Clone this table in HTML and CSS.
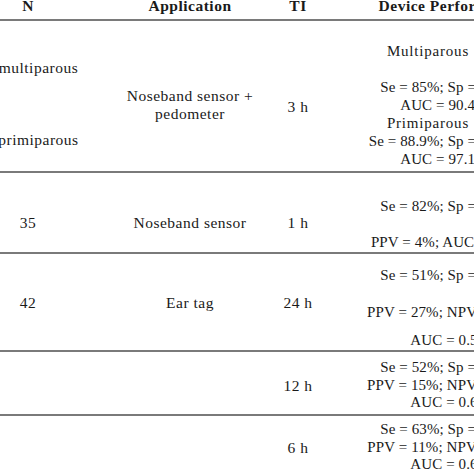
FILE: index.html
```html
<!DOCTYPE html>
<html>
<head>
<meta charset="utf-8">
<link rel="stylesheet" href="styles.css">
</head>
<body>
<div class="sheet">
  <table class="perf">
    <colgroup>
      <col class="c-n"><col class="c-app"><col class="c-ti"><col class="c-dev">
    </colgroup>
    <thead>
      <tr>
        <th>N</th>
        <th class="app">Application</th>
        <th>TI</th>
        <th class="dev-head">Device Performance</th>
      </tr>
    </thead>
    <tbody>
      <tr class="r1">
        <td class="n"><div>31 multiparous</div><div class="skip3">14 primiparous</div></td>
        <td class="app">Noseband sensor +<br>pedometer</td>
        <td class="ti">3 h</td>
        <td class="dev">
          <div class="group">Multiparous</div>
          <div class="skip1">Se = 85%; Sp = 97%</div>
          <div>AUC = 90.4%</div>
          <div class="group">Primiparous</div>
          <div>Se = 88.9%; Sp = 96.1%</div>
          <div>AUC = 97.1%</div>
        </td>
      </tr>
      <tr class="r2">
        <td class="n">35</td>
        <td class="app">Noseband sensor</td>
        <td class="ti">1 h</td>
        <td class="dev">
          <div>Se = 82%; Sp = 91%</div>
          <div class="skip1">PPV = 4%; AUC = 0.86</div>
        </td>
      </tr>
      <tr class="r3">
        <td class="n">42</td>
        <td class="app">Ear tag</td>
        <td class="ti">24 h</td>
        <td class="dev">
          <div>Se = 51%; Sp = 79%</div>
          <div class="wide">PPV = 27%; NPV = 91%</div>
          <div class="tight">AUC = 0.5</div>
        </td>
      </tr>
      <tr class="r4">
        <td class="n"></td>
        <td class="app"></td>
        <td class="ti">12 h</td>
        <td class="dev">
          <div>Se = 52%; Sp = 81%</div>
          <div>PPV = 15%; NPV = 96%</div>
          <div>AUC = 0.6</div>
        </td>
      </tr>
      <tr class="r5">
        <td class="n"></td>
        <td class="app"></td>
        <td class="ti">6 h</td>
        <td class="dev">
          <div>Se = 63%; Sp = 74%</div>
          <div>PPV = 11%; NPV = 97%</div>
          <div>AUC = 0.6</div>
        </td>
      </tr>
    </tbody>
  </table>
</div>
</body>
</html>
```

FILE: styles.css
```css
html, body {
  margin: 0;
  padding: 0;
  background: #ffffff;
}

.sheet {
  width: 474px;
  height: 474px;
  overflow: hidden;
}

.perf {
  table-layout: fixed;
  border-collapse: collapse;
  width: 596px;
  margin-left: -32px;
  margin-top: -3px;
  font-family: "Liberation Serif", "Times New Roman", serif;
  font-size: 15.5px;
  letter-spacing: 0.5px;
  line-height: 18px;
  color: #1a1a1a;
  text-align: center;
}

.c-n { width: 120px; }
.c-app { width: 184px; }
.c-ti { width: 52px; }
.c-dev { width: 240px; }

.perf th,
.perf td {
  padding: 0;
  vertical-align: top;
  white-space: nowrap;
}

.perf th {
  font-weight: bold;
  padding-bottom: 4px;
  border-bottom: 2px solid #7a7a7a;
}

.perf .app {
  padding-left: 20px;
}

.perf .dev-head {
  padding-left: 12px;
}

.perf td.dev {
  font-size: 15px;
  letter-spacing: 0.1px;
}

.perf td.dev .group {
  letter-spacing: 0.8px;
  padding-right: 32px;
}

.perf tbody tr {
  border-bottom: 2px solid #7a7a7a;
}

.skip1 { margin-top: 18px; }
.skip3 { margin-top: 54px; }
.wide { margin-top: 19px; }
.tight { margin-top: 10px; }

/* row 1: border 20 -> 172 */
.perf tr.r1 { height: 152px; }
.r1 .n { padding-top: 38px; }
.r1 .app { padding-top: 66px; }
.r1 .ti { padding-top: 77px; }
.r1 .dev { padding-top: 21px; }

/* row 2: 172 -> 253 */
.perf tr.r2 { height: 81px; }
.r2 .n,
.r2 .app,
.r2 .ti { padding-top: 41px; }
.r2 .dev { padding-top: 24px; }

/* row 3: 253 -> 351 */
.perf tr.r3 { height: 98px; }
.r3 .n,
.r3 .app,
.r3 .ti { padding-top: 40px; }
.r3 .dev { padding-top: 12px; }

/* row 4: 351 -> 415 */
.perf tr.r4 { height: 64px; }
.r4 .ti { padding-top: 25px; }
.r4 .dev { padding-top: 7px; line-height: 17.5px; }

/* row 5: 415 -> */
.perf tr.r5 { height: 70px; }
.r5 .ti { padding-top: 23px; }
.r5 .dev { padding-top: 5px; line-height: 17.5px; }
```
